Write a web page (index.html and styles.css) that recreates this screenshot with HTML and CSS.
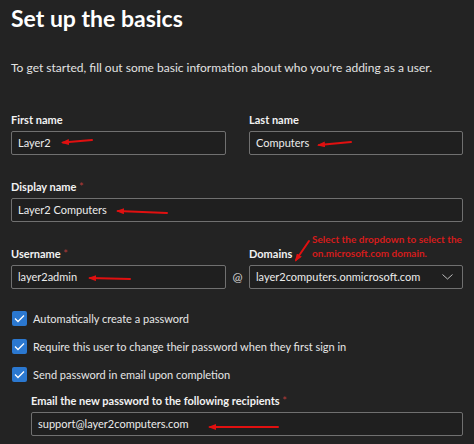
FILE: index.html
```html
<!DOCTYPE html>
<html lang="en">
<head>
<meta charset="utf-8">
<title>Set up the basics</title>
<link rel="stylesheet" href="styles.css">
</head>
<body>
<div class="page">
  <h1 class="title">Set up the basics</h1>
  <p class="intro">To get started, fill out some basic information about who you're adding as a user.</p>

  <div class="grid">
    <div class="field col-left">
      <label class="label">First name</label>
      <div class="input">Layer2</div>
    </div>
    <div class="field col-right">
      <label class="label">Last name</label>
      <div class="input">Computers</div>
    </div>

    <div class="field col-full">
      <label class="label">Display name <span class="req">*</span></label>
      <div class="input">Layer2 Computers</div>
    </div>

    <div class="field col-left">
      <label class="label">Username <span class="req">*</span></label>
      <div class="input">layer2admin</div>
    </div>
    <div class="at">@</div>
    <div class="field col-right">
      <label class="label">Domains</label>
      <div class="input select">
        <span>layer2computers.onmicrosoft.com</span>
        <svg class="chev" width="11" height="6" viewBox="0 0 11 6"><path d="M0.5 0.5 L5.5 5 L10.5 0.5" fill="none" stroke="#bdbdbd" stroke-width="1"/></svg>
      </div>
    </div>
  </div>

  <div class="checks">
    <div class="check"><span class="box"><svg width="11" height="9" viewBox="0 0 11 9"><path d="M1 4.5 L4 7.5 L10 1.5" fill="none" stroke="#fff" stroke-width="1.3"/></svg></span><span>Automatically create a password</span></div>
    <div class="check"><span class="box"><svg width="11" height="9" viewBox="0 0 11 9"><path d="M1 4.5 L4 7.5 L10 1.5" fill="none" stroke="#fff" stroke-width="1.3"/></svg></span><span>Require this user to change their password when they first sign in</span></div>
    <div class="check"><span class="box"><svg width="11" height="9" viewBox="0 0 11 9"><path d="M1 4.5 L4 7.5 L10 1.5" fill="none" stroke="#fff" stroke-width="1.3"/></svg></span><span>Send password in email upon completion</span></div>
  </div>

  <div class="field email">
    <label class="label">Email the new password to the following recipients <span class="req">*</span></label>
    <div class="input">support@layer2computers.com</div>
  </div>
</div>

<div class="note">Select the dropdown to select the<br>on.microsoft.com domain.</div>

<svg class="arrows" width="474" height="444" viewBox="0 0 474 444">
  <defs>
    <marker id="ah" markerWidth="8" markerHeight="6" refX="6" refY="3" orient="auto" markerUnits="userSpaceOnUse">
      <path d="M8 3 L0 0 L0 6 Z" fill="#e01010"/>
    </marker>
  </defs>
  <g stroke="#e01010" stroke-width="2" fill="none" stroke-linecap="round">
    <line x1="92" y1="140" x2="63" y2="142.5" marker-end="url(#ah)"/>
    <line x1="351" y1="142" x2="319" y2="145" marker-end="url(#ah)"/>
    <line x1="167" y1="213" x2="118" y2="211" marker-end="url(#ah)"/>
    <line x1="130" y1="279" x2="90" y2="278" marker-end="url(#ah)"/>
    <line x1="278" y1="427" x2="210" y2="427" marker-end="url(#ah)"/>
    <line x1="309" y1="241" x2="296" y2="260" marker-end="url(#ah)"/>
  </g>
</svg>
</body>
</html>
```

FILE: styles.css
```css
html, body {
  margin: 0;
  padding: 0;
  background: #232323;
}
body {
  width: 474px;
  height: 444px;
  overflow: hidden;
  position: relative;
  font-family: Lato, "Noto Sans", sans-serif;
  color: #e6e6e6;
}
.page {
  padding: 0 11px;
}
.title {
  margin: 0;
  padding-top: 3px;
  font-size: 23px;
  line-height: 30px;
  font-weight: 700;
  color: #ffffff;
}
.intro {
  margin: 27px 0 0;
  font-size: 12px;
  line-height: 16px;
  color: #e2e2e2;
}
.grid {
  display: grid;
  grid-template-columns: 215px 23px 214px;
  row-gap: 24px;
  margin-top: 36px;
}
.col-left { grid-column: 1; }
.col-right { grid-column: 3; }
.col-full { grid-column: 1 / 4; }
.field {
  display: flex;
  flex-direction: column;
  gap: 3px;
}
.label {
  font-size: 11px;
  line-height: 16px;
  font-weight: 700;
  color: #f2f2f2;
}
.req {
  color: #b03a3a;
  font-weight: 400;
}
.input {
  box-sizing: border-box;
  height: 24px;
  border: 1px solid #707070;
  border-radius: 2px;
  background: #1f1f1f;
  padding: 0 6px;
  font-size: 11px;
  line-height: 22px;
  color: #ececec;
  display: flex;
  align-items: center;
}
.select {
  justify-content: space-between;
}
.chev {
  margin-right: 3px;
}
.at {
  grid-column: 2;
  align-self: end;
  height: 24px;
  line-height: 24px;
  text-align: center;
  font-size: 12px;
  color: #d8d8d8;
}
.checks {
  margin-top: 15px;
  display: flex;
  flex-direction: column;
  padding-left: 1px;
}
.check {
  display: flex;
  align-items: center;
  gap: 6px;
  height: 28px;
  font-size: 11px;
  color: #e6e6e6;
}
.box {
  width: 15px;
  height: 15px;
  border-radius: 2px;
  background: #2b78d0;
  display: flex;
  align-items: center;
  justify-content: center;
}
.email {
  margin-top: 5px;
  margin-left: 20px;
}
.note {
  position: absolute;
  left: 312px;
  top: 232px;
  font-size: 10px;
  line-height: 14px;
  font-weight: 700;
  color: #d41c1c;
  white-space: nowrap;
}
.arrows {
  position: absolute;
  left: 0;
  top: 0;
  pointer-events: none;
}
```
